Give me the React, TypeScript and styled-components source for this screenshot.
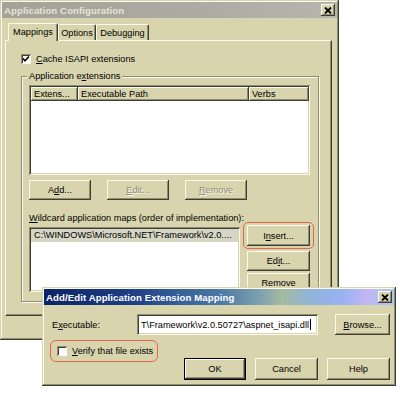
import React from "react";
import styled, { createGlobalStyle } from "styled-components";

const FACE = "#d8d5ae";
const HI = "#fbfaee";
const SHADOW = "#8f8d72";
const DARK = "#3f3e33";

const GlobalStyle = createGlobalStyle`
  html, body { margin: 0; padding: 0; background: #fff; }
  body { font-family: "Liberation Sans", Arial, sans-serif; font-size: 9.2px; color: #000; }
  * { box-sizing: border-box; }
`;

const raised = `
  background: ${FACE};
  box-shadow: inset -1px -1px ${DARK}, inset 1px 1px ${HI}, inset -2px -2px ${SHADOW}, inset 2px 2px ${FACE};
`;

const sunken = `
  box-shadow: inset 1px 1px ${SHADOW}, inset -1px -1px ${HI}, inset 2px 2px ${DARK}, inset -2px -2px ${FACE};
`;

const Desktop = styled.div`
  position: relative;
  width: 400px;
  height: 393px;
  overflow: hidden;
  background: #fff;
`;

const Window = styled.div<{ $left: number; $top: number; $width: number; $height: number }>`
  position: absolute;
  left: ${(p) => p.$left}px;
  top: ${(p) => p.$top}px;
  width: ${(p) => p.$width}px;
  height: ${(p) => p.$height}px;
  padding: 2px;
  display: flex;
  flex-direction: column;
  background: ${FACE};
  box-shadow: inset -1px -1px ${DARK}, inset 1px 1px ${FACE}, inset -2px -2px ${SHADOW}, inset 2px 2px ${HI};
`;

const TitleBar = styled.div<{ $active?: boolean }>`
  height: 16px;
  flex: none;
  display: flex;
  align-items: center;
  justify-content: space-between;
  padding: 0 2px 0 2px;
  font-weight: bold;
  font-size: 9.6px;
  letter-spacing: 0.1px;
  color: ${(p) => (p.$active ? "#ffffff" : "#e6e4d2")};
  background: ${(p) =>
    p.$active
      ? "linear-gradient(to right, #0c2366 0%, #1d3f86 25%, #4a78a6 50%, #7fa2ae 62%, #a4bba0 68%, #8fb4d8 76%, #98b2f2 85%, #c2b6f4 92%, #a9c8f0 100%)"
      : "linear-gradient(to right, #a2a29a 0%, #acaca4 60%, #b6b6ae 100%)"};
`;

const CloseButton = styled.div`
  width: 14px;
  height: 12px;
  display: flex;
  align-items: center;
  justify-content: center;
  ${raised}
`;

const Body = styled.div`
  flex: 1;
  display: flex;
  flex-direction: column;
  padding: 4px 5px 0 3px;
`;

const TabStrip = styled.div`
  display: flex;
  align-items: flex-end;
  height: 18px;
  padding-left: 3px;
`;

const Tab = styled.div<{ $selected?: boolean; $w: number }>`
  width: ${(p) => p.$w}px;
  height: ${(p) => (p.$selected ? 18 : 16)}px;
  display: flex;
  align-items: center;
  justify-content: center;
  padding-bottom: ${(p) => (p.$selected ? 2 : 0)}px;
  background: ${FACE};
  border-top: 1px solid ${HI};
  border-left: 1px solid ${HI};
  border-right: 1px solid ${DARK};
  border-radius: 2px 2px 0 0;
  margin-bottom: ${(p) => (p.$selected ? -1 : 0)}px;
  position: relative;
  z-index: ${(p) => (p.$selected ? 1 : 0)};
  box-shadow: inset -1px 0 ${SHADOW};
`;

const TabPanel = styled.div`
  height: 276px;
  display: flex;
  flex-direction: column;
  padding: 13px 12px 0 15px;
  border-top: 1px solid ${HI};
  border-left: 1px solid ${HI};
  border-right: 1px solid ${DARK};
  border-bottom: 1px solid ${DARK};
  box-shadow: inset -1px -1px ${SHADOW};
`;

const CheckRow = styled.div`
  display: flex;
  align-items: center;
  gap: 5px;
  height: 10px;
  line-height: 10px;
`;

const CheckBox = styled.div`
  width: 10px;
  height: 10px;
  flex: none;
  background: #fff;
  display: flex;
  align-items: center;
  justify-content: center;
  box-shadow: inset 1px 1px ${SHADOW}, inset -1px -1px ${HI}, inset 2px 2px ${DARK};
`;

const GroupFrame = styled.div`
  margin-top: 12px;
  flex: 1;
  margin-bottom: 13px;
  display: flex;
  flex-direction: column;
  padding: 0 8px 0 7px;
  border: 1px solid ${SHADOW};
  box-shadow: inset 1px 1px ${HI}, 1px 1px ${HI};
`;

const GroupLabel = styled.div`
  align-self: flex-start;
  margin-top: -6px;
  margin-left: -2px;
  padding: 0 2px;
  height: 10px;
  line-height: 10px;
  background: ${FACE};
`;

const ListView = styled.div`
  margin-top: 4px;
  height: 90px;
  padding: 2px;
  background: #fff;
  ${sunken}
`;

const HeaderRow = styled.div`
  display: flex;
  height: 14px;
`;

const HeaderCell = styled.div<{ $w: number }>`
  width: ${(p) => p.$w}px;
  flex: none;
  padding-left: 3px;
  display: flex;
  align-items: center;
  ${raised}
`;

const ButtonRow = styled.div`
  margin-top: 5px;
  display: flex;
  gap: 16px;
`;

const Button = styled.div<{ $w: number; $h?: number; $disabled?: boolean; $default?: boolean; $gapLeft?: number }>`
  width: ${(p) => p.$w}px;
  height: ${(p) => p.$h ?? 20}px;
  margin-left: ${(p) => p.$gapLeft ?? 0}px;
  flex: none;
  display: flex;
  align-items: center;
  justify-content: center;
  background: ${FACE};
  color: ${(p) => (p.$disabled ? SHADOW : "#000")};
  text-shadow: ${(p) => (p.$disabled ? `1px 1px ${HI}` : "none")};
  box-shadow: ${(p) =>
    p.$default
      ? `inset 0 0 0 1px #000, inset -2px -2px ${DARK}, inset 2px 2px ${HI}, inset -3px -3px ${SHADOW}`
      : `inset -1px -1px ${DARK}, inset 1px 1px ${HI}, inset -2px -2px ${SHADOW}, inset 2px 2px ${FACE}`};
`;

const FieldLabel = styled.div`
  margin-top: 13px;
  height: 10px;
  line-height: 10px;
`;

const WildRow = styled.div`
  margin-top: 4px;
  display: flex;
  gap: 7px;
  align-items: flex-start;
`;

const ListBox = styled.div`
  width: 212px;
  height: 65px;
  padding: 2px;
  background: #fff;
  ${sunken}
`;

const ListItem = styled.div<{ $selected?: boolean }>`
  height: 13px;
  line-height: 13px;
  padding-left: 3px;
  white-space: nowrap;
  background: ${(p) => (p.$selected ? "#d6d6c4" : "transparent")};
`;

const ButtonColumn = styled.div`
  margin-top: -2px;
  display: flex;
  flex-direction: column;
  gap: 2px;
`;

const Highlight = styled.div<{ $inset: string }>`
  margin: ${(p) => p.$inset};
  padding: 2px 3px;
  border: 1.5px solid #e2654e;
  border-radius: 5px;
`;

const DialogBody = styled.div`
  flex: 1;
  display: flex;
  flex-direction: column;
  padding: 9px 4px 4px 8px;
`;

const FormRow = styled.div`
  display: flex;
  align-items: center;
  height: 21px;
`;

const FormLabel = styled.div`
  width: 85px;
  flex: none;
`;

const TextInput = styled.div`
  width: 181px;
  height: 21px;
  flex: none;
  display: flex;
  align-items: center;
  padding-left: 4px;
  background: #fff;
  white-space: nowrap;
  overflow: hidden;
  ${sunken}
`;

const Caret = styled.span`
  display: inline-block;
  width: 1px;
  height: 11px;
  margin-left: 1px;
  background: #000;
`;

const BottomRow = styled.div`
  flex: 1;
  display: flex;
  justify-content: space-between;
`;

const CheckHighlight = styled.div`
  align-self: flex-start;
  margin: 5px 0 0 -2px;
  height: 22px;
  width: 108px;
  display: flex;
  align-items: center;
  gap: 5px;
  padding-left: 6px;
  border: 1.5px solid #e2654e;
  border-radius: 6px;
`;

const DialogButtons = styled.div`
  align-self: flex-end;
  display: flex;
  gap: 9px;
`;

const XIcon = () => (
  <svg width="8" height="7" viewBox="0 0 8 7">
    <path d="M1 0.5 L7 6.5 M7 0.5 L1 6.5" stroke="#000" strokeWidth="1.8" />
  </svg>
);

const CheckMark = () => (
  <svg width="8" height="8" viewBox="0 0 8 8">
    <path d="M1 3.5 L3 5.8 L7 1.5" stroke="#000" strokeWidth="1.6" fill="none" />
  </svg>
);

export default function App() {
  return (
    <Desktop>
      <GlobalStyle />
      <Window $left={0} $top={0} $width={339} $height={340}>
        <TitleBar>
          <span>Application Configuration</span>
          <CloseButton>
            <XIcon />
          </CloseButton>
        </TitleBar>
        <Body>
          <TabStrip>
            <Tab $w={50} $selected>
              Mappings
            </Tab>
            <Tab $w={38}>Options</Tab>
            <Tab $w={53}>Debugging</Tab>
          </TabStrip>
          <TabPanel>
            <CheckRow>
              <CheckBox>
                <CheckMark />
              </CheckBox>
              <span>
                <u>C</u>ache ISAPI extensions
              </span>
            </CheckRow>
            <GroupFrame>
              <GroupLabel>
                Application e<u>x</u>tensions
              </GroupLabel>
              <ListView>
                <HeaderRow>
                  <HeaderCell $w={47}>Extens...</HeaderCell>
                  <HeaderCell $w={171}>Executable Path</HeaderCell>
                  <HeaderCell $w={60}>Verbs</HeaderCell>
                </HeaderRow>
              </ListView>
              <ButtonRow>
                <Button $w={62}>
                  A<u>d</u>d...
                </Button>
                <Button $w={62} $disabled>
                  <u>E</u>dit...
                </Button>
                <Button $w={62} $disabled>
                  <u>R</u>emove
                </Button>
              </ButtonRow>
              <FieldLabel>
                <u>W</u>ildcard application maps (order of implementation):
              </FieldLabel>
              <WildRow>
                <ListBox>
                  <ListItem $selected>C:\WINDOWS\Microsoft.NET\Framework\v2.0....</ListItem>
                </ListBox>
                <ButtonColumn>
                  <Highlight $inset="-3px -4px 0">
                    <Button $w={63} $h={21}>
                      I<u>n</u>sert...
                    </Button>
                  </Highlight>
                  <Button $w={63} $h={20}>
                    Ed<u>i</u>t...
                  </Button>
                  <Button $w={63} $h={20}>
                    Re<u>m</u>ove
                  </Button>
                </ButtonColumn>
              </WildRow>
            </GroupFrame>
          </TabPanel>
        </Body>
      </Window>

      <Window $left={42} $top={287} $width={354} $height={99}>
        <TitleBar $active>
          <span>Add/Edit Application Extension Mapping</span>
          <CloseButton>
            <XIcon />
          </CloseButton>
        </TitleBar>
        <DialogBody>
          <FormRow>
            <FormLabel>
              E<u>x</u>ecutable:
            </FormLabel>
            <TextInput>
              T\Framework\v2.0.50727\aspnet_isapi.dll
              <Caret />
            </TextInput>
            <Button $w={55} $h={21} $gapLeft={17}>
              <u>B</u>rowse...
            </Button>
          </FormRow>
          <BottomRow>
            <CheckHighlight>
              <CheckBox />
              <span>
                <u>V</u>erify that file exists
              </span>
            </CheckHighlight>
            <DialogButtons>
              <Button $w={62} $h={22} $default>
                OK
              </Button>
              <Button $w={63} $h={22}>
                Cancel
              </Button>
              <Button $w={63} $h={22}>
                Help
              </Button>
            </DialogButtons>
          </BottomRow>
        </DialogBody>
      </Window>
    </Desktop>
  );
}
